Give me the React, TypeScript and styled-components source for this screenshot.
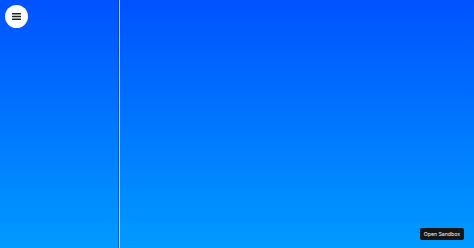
import styled, { createGlobalStyle } from "styled-components";

const Global = createGlobalStyle`
  html, body {
    margin: 0;
    padding: 0;
    height: 100%;
  }
  body {
    font-family: Inter, "Liberation Sans", sans-serif;
    overflow: hidden;
  }
  #root {
    height: 100%;
  }
`;

const Page = styled.div`
  position: relative;
  width: 100%;
  height: 100vh;
  background: linear-gradient(180deg, #0052ff 0%, #009bff 100%);
  display: flex;
`;

const Sidebar = styled.nav`
  width: 118px;
  height: 100%;
  flex-shrink: 0;
  border-right: 1px solid rgba(0, 40, 140, 0.5);
  box-shadow: 1px 0 0 rgba(200, 240, 255, 0.8);
  position: relative;
`;

const Toggle = styled.button`
  position: absolute;
  top: 5px;
  left: 5px;
  width: 23px;
  height: 23px;
  border-radius: 50%;
  border: none;
  background: #fff;
  padding: 0;
  display: flex;
  align-items: center;
  justify-content: center;
  cursor: pointer;
`;

const Footer = styled.div`
  position: absolute;
  right: 10px;
  bottom: 8px;
`;

const SandboxButton = styled.button`
  background: #151515;
  color: #fff;
  border: none;
  border-radius: 2px;
  font-family: Inter, "Liberation Sans", sans-serif;
  font-size: 5.2px;
  padding: 3px 4px;
  line-height: 6px;
  cursor: pointer;
`;

export default function App() {
  return (
    <>
      <Global />
      <Page>
        <Sidebar>
          <Toggle aria-label="menu">
            <svg width="9" height="7" viewBox="0 0 9 7">
              <path d="M0.5 0.75H8.5M0.5 3.5H8.5M0.5 6.25H8.5" stroke="#222" strokeWidth="1.3" strokeLinecap="round" />
            </svg>
          </Toggle>
        </Sidebar>
        <Footer>
          <SandboxButton>Open Sandbox</SandboxButton>
        </Footer>
      </Page>
    </>
  );
}
